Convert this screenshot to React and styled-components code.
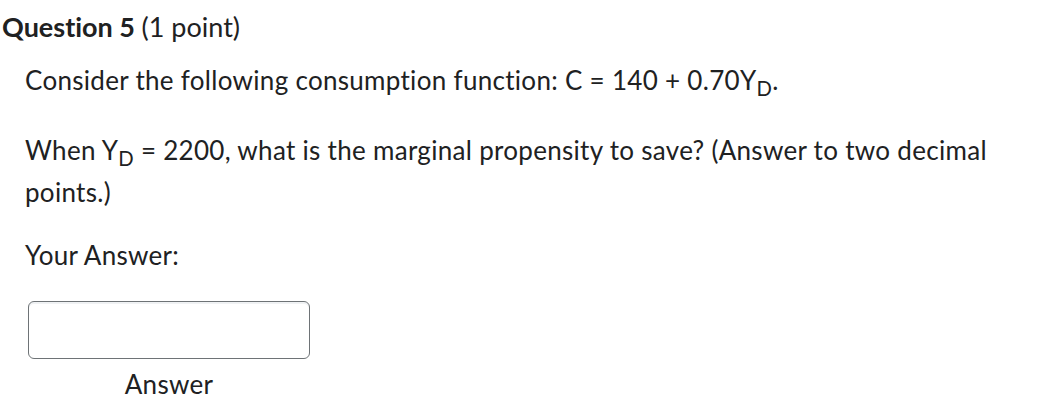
import React, { useState } from 'react';
import styled, { createGlobalStyle } from 'styled-components';

const GlobalStyle = createGlobalStyle`
  body {
    margin: 0;
    background: #ffffff;
    font-family: Lato, "Noto Sans", sans-serif;
    font-variant-ligatures: none;
    color: #202122;
  }
`;

const Page = styled.div`
  padding: 10px 0 0 2px;
`;

const Heading = styled.h2`
  margin: 0;
  font-size: 27px;
  font-weight: 700;
  line-height: 34px;
  color: #202122;
`;

const Points = styled.span`
  font-weight: 400;
`;

const Body = styled.div`
  padding: 15px 0 0 23px;
  font-size: 26px;
  line-height: 42px;
  letter-spacing: 0.3px;
`;

const Para = styled.p`
  margin: 0 0 ${(p) => p.$gap ?? 28}px;
  max-width: 990px;
`;

const Sub = styled.sub`
  font-size: 0.78em;
  vertical-align: -6px;
  line-height: 0;
`;

const AnswerBlock = styled.div`
  display: flex;
  flex-direction: column;
  align-items: center;
  width: 282px;
  margin: 25px 0 0 3px;
`;

const Input = styled.input`
  box-sizing: border-box;
  width: 282px;
  height: 58px;
  border: 1px solid #6e7376;
  border-radius: 6px;
  background: #ffffff;
  font-family: inherit;
  font-size: 22px;
  padding: 0 12px;
  box-shadow: inset 0 2px 0 0 rgba(180, 190, 200, 0.2);
  &:focus {
    outline: none;
    border-color: #006fbf;
  }
`;

const Caption = styled.label`
  font-size: 26px;
  line-height: 28px;
  margin-top: 11px;
`;

function App() {
  const [value, setValue] = useState('');

  return (
    <>
      <GlobalStyle />
      <Page>
        <Heading>
          Question 5 <Points>(1 point)</Points>
        </Heading>
        <Body>
          <Para>
            Consider the following consumption function: C = 140 + 0.70Y<Sub>D</Sub>.
          </Para>
          <Para $gap={21}>
            When Y<Sub>D</Sub> = 2200, what is the marginal propensity to save? (Answer to two decimal
            points.)
          </Para>
          <Para $gap={0}>Your Answer:</Para>
          <AnswerBlock>
            <Input
              id="answer"
              value={value}
              onChange={(e) => setValue(e.target.value)}
            />
            <Caption htmlFor="answer">Answer</Caption>
          </AnswerBlock>
        </Body>
      </Page>
    </>
  );
}

export default App;
